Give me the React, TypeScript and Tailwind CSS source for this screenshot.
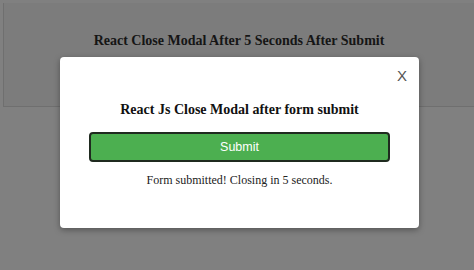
export default function App() {
  return (
    <div className="relative h-[270px] w-[474px] overflow-hidden bg-[#808080] font-['Liberation_Serif',serif]">
      {/* page behind the overlay */}
      <div className="ml-[3px] mt-[3px] h-[104px] border-b border-l border-[#6f6f6f] bg-[#7c7c7c] pt-[29px] text-center">
        <h1 className="text-[14px] font-bold leading-[18px] text-[#151515]">
          React Close Modal After 5 Seconds After Submit
        </h1>
      </div>

      {/* modal */}
      <div className="absolute inset-0 pl-[60px] pt-[57px]">
        <div className="h-[171px] w-[359px] rounded-[4px] bg-white px-[29px] pt-[10px] shadow-[0_2px_6px_rgba(0,0,0,0.35)]">
          <div className="flex justify-end">
            <button className="mr-[-17px] font-['Liberation_Sans',sans-serif] text-[15px] leading-[18px] text-[#555]">
              X
            </button>
          </div>
          <h2 className="mt-[16px] text-center text-[14px] font-bold leading-[18px] text-[#111]">
            React Js Close Modal after form submit
          </h2>
          <button className="mt-[13px] h-[30px] w-full rounded-[4px] border-2 border-[#1f2a1f] bg-[#4caf50] font-['Liberation_Sans',sans-serif] text-[12.5px] text-white">
            Submit
          </button>
          <p className="mt-[10px] text-center text-[12px] leading-[16px] text-[#222]">
            Form submitted! Closing in 5 seconds.
          </p>
        </div>
      </div>
    </div>
  );
}
